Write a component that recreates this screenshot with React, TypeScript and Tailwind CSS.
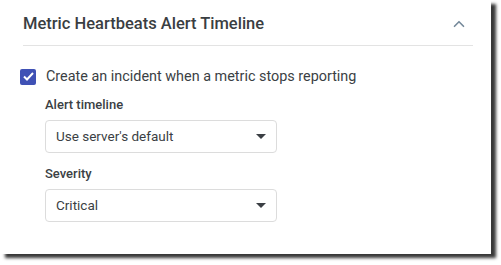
import { ChevronUp } from "lucide-react";

function Caret() {
  return (
    <svg width="10" height="5" viewBox="0 0 10 5" className="shrink-0">
      <path d="M0 0 L10 0 L5 5 Z" fill="#3b3f44" />
    </svg>
  );
}

function SelectBox({ value }: { value: string }) {
  return (
    <div className="flex h-[33px] w-[232px] items-center justify-between rounded-[4px] border border-[#dcdcdc] bg-white pl-[10px] pr-[10px]">
      <span className="text-[13.5px] text-[#3b3f44]">{value}</span>
      <Caret />
    </div>
  );
}

export default function App() {
  return (
    <div className="h-[265px] w-[501px] bg-white font-['Roboto',sans-serif]">
      <div className="h-[254px] w-[491px] bg-white shadow-[5px_4px_3px_rgba(0,0,0,0.78)]">
        <div className="pl-[23px] pr-[18px] pt-[9px]">
          <div className="flex h-[37px] items-center justify-between border-b border-[#e3e3e3] pb-[6px]">
            <span className="text-[16.5px] font-medium text-[#3a3e42]">
              Metric Heartbeats Alert Timeline
            </span>
            <ChevronUp size={18} strokeWidth={2.2} className="mr-[5px] text-[#75899a]" />
          </div>
        </div>

        <div className="pl-[20px] pt-[20px]">
          <label className="flex items-center gap-[10px]">
            <span className="flex h-[16px] w-[16px] items-center justify-center rounded-[2px] bg-[#3f51b5]">
              <svg width="11" height="9" viewBox="0 0 11 9">
                <path d="M1 4.5 L4 7.5 L10 1" fill="none" stroke="white" strokeWidth="2" />
              </svg>
            </span>
            <span className="text-[14.4px] text-[#3b3f44]">
              Create an incident when a metric stops reporting
            </span>
          </label>

          <div className="pl-[25px] pt-[7px]">
            <div className="text-[13px] font-medium text-[#3b3f44]">Alert timeline</div>
            <div className="pt-[6px]">
              <SelectBox value="Use server's default" />
            </div>
            <div className="pt-[11px] text-[13px] font-medium text-[#3b3f44]">Severity</div>
            <div className="pt-[5px]">
              <SelectBox value="Critical" />
            </div>
          </div>
        </div>
      </div>
    </div>
  );
}
